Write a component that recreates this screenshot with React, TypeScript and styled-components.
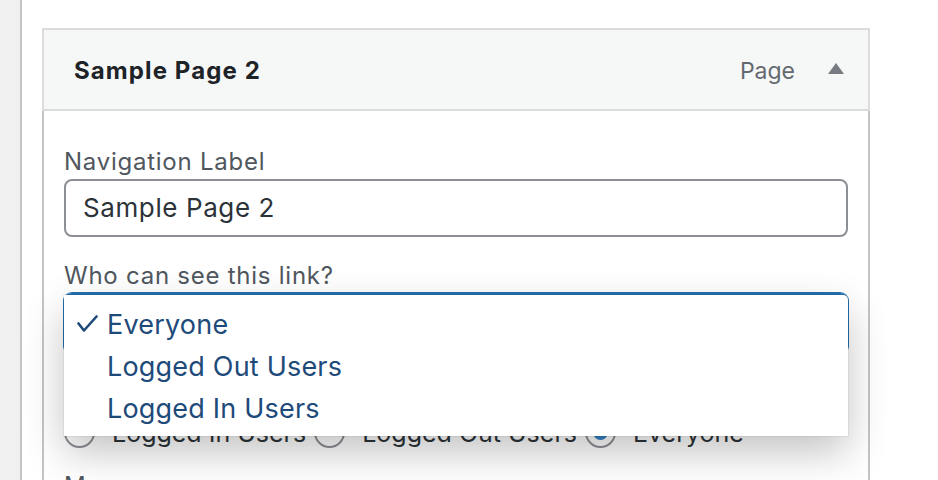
import React from 'react';
import styled, { createGlobalStyle } from 'styled-components';

const GlobalStyle = createGlobalStyle`
  html, body {
    margin: 0;
    padding: 0;
    background: #fff;
    font-family: Inter, "Noto Sans", "Liberation Sans", sans-serif;
  }
`;

const options = ['Everyone', 'Logged Out Users', 'Logged In Users'];
const radios = [
  { label: 'Logged In Users', checked: false },
  { label: 'Logged Out Users', checked: false },
  { label: 'Everyone', checked: true },
];

const App: React.FC = () => {
  return (
    <>
      <GlobalStyle />
      <Page>
        <SideStrip />
        <Main>
          <MenuItem>
            <ItemHandle>
              <ItemTitle>Sample Page 2</ItemTitle>
              <ItemControls>
                <ItemType>Page</ItemType>
                <ToggleArrow />
              </ItemControls>
            </ItemHandle>
            <ItemSettings>
              <FieldLabel>Navigation Label</FieldLabel>
              <TextInput type="text" value="Sample Page 2" readOnly />
              <FieldLabel $gap={24}>Who can see this link?</FieldLabel>
              <SelectWrap>
                <SelectBox>Everyone</SelectBox>
                {/* native select menu, opened over the field */}
                <Popup>
                  {options.map((opt, i) => (
                    <Option key={opt}>
                      {i === 0 && (
                        <Check width="21" height="18" viewBox="0 0 21 18">
                          <path
                            d="M1.5 8.5 L7 15.5 L19.5 1.5"
                            fill="none"
                            stroke="currentColor"
                            strokeWidth="2.6"
                            strokeLinecap="round"
                            strokeLinejoin="round"
                          />
                        </Check>
                      )}
                      {opt}
                    </Option>
                  ))}
                </Popup>
              </SelectWrap>
              <RadioRow>
                {radios.map(r => (
                  <RadioItem key={r.label}>
                    <RadioCircle $checked={r.checked} />
                    {r.label}
                  </RadioItem>
                ))}
              </RadioRow>
              <FieldLabel $gap={23}>Move</FieldLabel>
            </ItemSettings>
          </MenuItem>
        </Main>
      </Page>
    </>
  );
};

export default App;

// Styled

const Page = styled.div`
  display: flex;
  height: 480px;
  overflow: hidden;
`;

const SideStrip = styled.div`
  width: 20px;
  flex-shrink: 0;
  background: #f0f0f1;
  border-right: 2px solid #c3c4c7;
`;

const Main = styled.div`
  flex: 1;
  padding: 28px 0 0 20px;
`;

const MenuItem = styled.div`
  width: 828px;
`;

const ItemHandle = styled.div`
  display: flex;
  align-items: center;
  justify-content: space-between;
  height: 83px;
  box-sizing: border-box;
  padding: 2px 24px 0 30px;
  background: #f6f7f7;
  border: 2px solid #dcdcde;
`;

const ItemTitle = styled.span`
  font-size: 24px;
  font-weight: 700;
  letter-spacing: 1.1px;
  color: #1d2327;
`;

const ItemControls = styled.div`
  display: flex;
  align-items: center;
  gap: 33px;
`;

const ItemType = styled.span`
  font-size: 23px;
  color: #646970;
`;

const ToggleArrow = styled.span`
  width: 0;
  height: 0;
  border-left: 8px solid transparent;
  border-right: 8px solid transparent;
  border-bottom: 11px solid #787c82;
  margin-top: -4px;
`;

const ItemSettings = styled.div`
  border: 2px solid #c3c4c7;
  border-top: none;
  padding: 36px 20px 40px 20px;
  height: 400px;
`;

const FieldLabel = styled.div<{ $gap?: number }>`
  font-size: 24px;
  line-height: 30px;
  letter-spacing: 0.75px;
  color: #50575e;
  margin-top: ${p => p.$gap ?? 0}px;
  margin-bottom: 2px;
`;

const TextInput = styled.input`
  display: block;
  width: 784px;
  height: 58px;
  box-sizing: border-box;
  padding: 0 17px 2px;
  border: 2px solid #8c8f94;
  border-radius: 8px;
  font-family: inherit;
  font-size: 26px;
  letter-spacing: 0.6px;
  color: #2c3338;
  background: #fff;
  outline: none;
`;

const SelectWrap = styled.div`
  position: relative;
  width: 784px;
`;

const SelectBox = styled.div`
  height: 61px;
  box-sizing: border-box;
  border: 2px solid #2271b1;
  border-radius: 8px;
  box-shadow: 0 0 0 1px #2271b1;
  padding: 0 17px;
  font-size: 26px;
  line-height: 57px;
  color: #2c3338;
`;

const Popup = styled.div`
  position: absolute;
  top: 2px;
  left: 0;
  right: 0;
  z-index: 2;
  background: #fff;
  padding: 9px 0 6px;
  border-radius: 0 5px 0 0;
  box-shadow: 0 16px 40px rgba(0, 0, 0, 0.24), 0 0 0 1px rgba(0, 0, 0, 0.05);
`;

const Option = styled.div`
  position: relative;
  height: 42px;
  line-height: 42px;
  padding-left: 43px;
  font-size: 27px;
  letter-spacing: 0.2px;
  color: #1e4a7a;
`;

const Check = styled.svg`
  position: absolute;
  left: 13px;
  top: 11px;
  color: #1e4a7a;
`;

const RadioRow = styled.div`
  display: flex;
  gap: 8px;
  margin-top: 63px;
`;

const RadioItem = styled.label`
  display: flex;
  align-items: center;
  gap: 17px;
  font-size: 25px;
  line-height: 30px;
  color: #2c3338;
`;

const RadioCircle = styled.span<{ $checked: boolean }>`
  position: relative;
  width: 31px;
  height: 31px;
  box-sizing: border-box;
  border: 2px solid #8c8f94;
  border-radius: 50%;

  &::after {
    content: '';
    display: ${p => (p.$checked ? 'block' : 'none')};
    position: absolute;
    inset: 6px;
    border-radius: 50%;
    background: #3582c4;
  }
`;
